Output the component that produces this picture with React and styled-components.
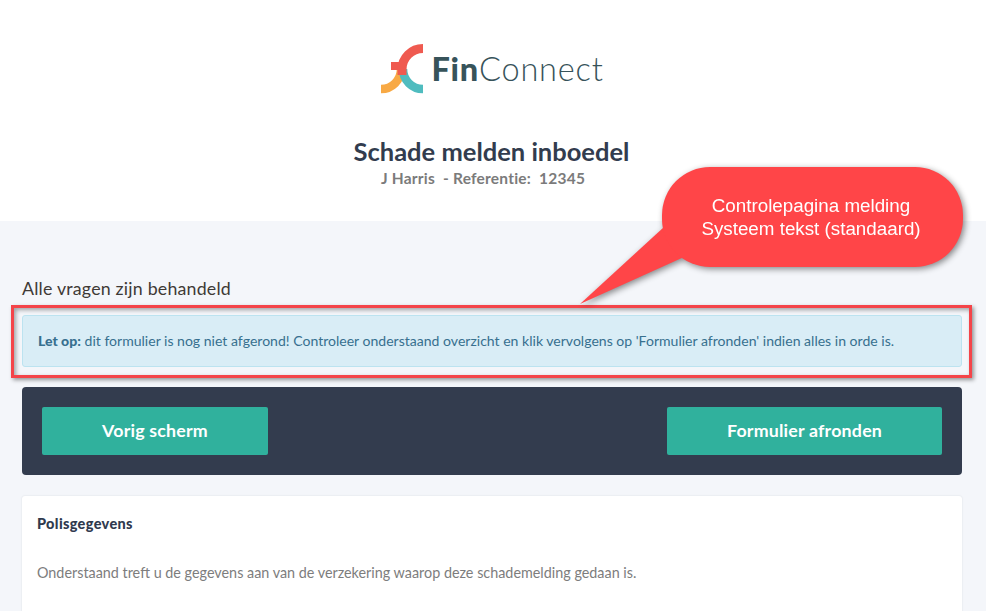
import React from "react";
import styled, { createGlobalStyle } from "styled-components";

const Global = createGlobalStyle`
  html, body { margin: 0; padding: 0; height: 100%; overflow: hidden; background: #f4f6fa; }
  * { box-sizing: border-box; }
  body { font-family: "Lato", "Open Sans", sans-serif; }
`;

const Page = styled.div`
  position: relative;
  width: 986px;
  height: 611px;
  overflow: hidden;
  background: #f4f6fa;
`;

const Header = styled.header`
  height: 221px;
  background: #fff;
  display: flex;
  flex-direction: column;
  align-items: center;
  padding-top: 42px;
`;

const Brand = styled.div`
  display: flex;
  align-items: center;
  gap: 6px;
  height: 53px;
  margin-left: -3px;
`;

const BrandName = styled.div`
  font-size: 32.5px;
  letter-spacing: 0.8px;
  color: #37535a;
  font-weight: 300;
  line-height: 53px;
  b { font-weight: 900; }
`;

const Title = styled.h1`
  margin: 41px 3px 0 0;
  font-size: 25.5px;
  line-height: 30px;
  font-weight: 700;
  color: #323c4e;
`;

const Subtitle = styled.div`
  font-size: 15.5px;
  letter-spacing: 0.22px;
  line-height: 20px;
  font-weight: 700;
  color: #7b7b7b;
  white-space: pre;
  margin: 2px 20px 0 0;
`;

const Main = styled.main`
  padding: 57px 24px 0 22px;
  display: flex;
  flex-direction: column;
`;

const Heading = styled.h2`
  margin: 0 0 17px;
  font-size: 17.8px;
  line-height: 20px;
  font-weight: 400;
  letter-spacing: 0.2px;
  color: #3f3a36;
`;

const Alert = styled.div`
  height: 52px;
  background: #d9edf6;
  border: 1px solid #bce3f0;
  border-radius: 3px;
  color: #37708f;
  font-size: 14.05px;
  display: flex;
  align-items: center;
  padding: 0 0 2px 15px;
  white-space: pre;
  b { font-weight: 900; }
`;

const ActionBar = styled.div`
  margin-top: 20px;
  height: 88px;
  background: #333c4e;
  border-radius: 4px;
  padding: 20px;
  display: flex;
  justify-content: space-between;
`;

const Button = styled.button`
  width: ${(p) => p.$w}px;
  height: 48px;
  border: 0;
  border-radius: 2px;
  padding: 0 0 3px;
  background: #30b19d;
  color: #fff;
  font: 700 17.8px "Lato", sans-serif;
  letter-spacing: 0.2px;
`;

const Card = styled.section`
  margin-top: 21px;
  height: 200px;
  background: #fff;
  border-radius: 3px;
  box-shadow: 0 0 2px rgba(40, 60, 80, 0.14);
  padding: 19px 15px;
`;

const CardTitle = styled.h3`
  margin: 0;
  font-size: 14.5px;
  letter-spacing: 0.35px;
  line-height: 18px;
  font-weight: 900;
  color: #2f3a4e;
`;

const CardText = styled.p`
  margin: 31px 0 0;
  font-size: 14.36px;
  line-height: 18px;
  color: #7d7d7d;
`;

const Frame = styled.div`
  position: absolute;
  left: 11px;
  top: 305px;
  width: 961px;
  height: 73px;
  border: 3px solid #f44449;
  box-shadow: 2px 2px 4px rgba(0, 0, 0, 0.4), inset 2px 2px 4px rgba(0, 0, 0, 0.35);
  pointer-events: none;
`;

const Callout = styled.div`
  position: absolute;
  left: 580px;
  top: 167px;
  width: 383px;
  height: 138px;
  filter: drop-shadow(2px 2px 3px rgba(0, 0, 0, 0.45));
`;

const CalloutTail = styled.svg`
  position: absolute;
  left: 0;
  top: 0;
`;

const CalloutBody = styled.div`
  position: absolute;
  left: 82px;
  top: 0;
  width: 301px;
  height: 100px;
  border-radius: 48px;
  background: #ff4548;
  color: #fff;
  font-family: "Liberation Sans", Arial, sans-serif;
  font-size: 18.8px;
  line-height: 23px;
  text-align: center;
  display: flex;
  align-items: center;
  justify-content: center;
  padding-right: 3px;
`;

const Logo = () => (
  <svg width="46" height="53" viewBox="0 0 46 53" fill="none">
    <path d="M2 47 A20 20 0 0 0 22 27" stroke="#f8a944" strokeWidth="8.5" />
    <path d="M44 47 A20 20 0 0 1 24 27" stroke="#4fbcbf" strokeWidth="8.5" />
    <path d="M44 6.5 A21 21 0 0 0 23 27.5 L23 33" stroke="#ef5a50" strokeWidth="9" />
    <rect x="12" y="20" width="14" height="8" fill="#ef5a50" />
  </svg>
);

export default function App() {
  return (
    <Page>
      <Global />
      <Header>
        <Brand>
          <Logo />
          <BrandName><b>Fin</b>Connect</BrandName>
        </Brand>
        <Title>Schade melden inboedel</Title>
        <Subtitle>J Harris  - Referentie:  12345</Subtitle>
      </Header>
      <Main>
        <Heading>Alle vragen zijn behandeld</Heading>
        <Alert>
          <b>Let op:</b> dit formulier is nog niet afgerond! Controleer onderstaand overzicht en klik vervolgens op 'Formulier afronden' indien alles in orde is.
        </Alert>
        <ActionBar>
          <Button $w={226}>Vorig scherm</Button>
          <Button $w={275}>Formulier afronden</Button>
        </ActionBar>
        <Card>
          <CardTitle>Polisgegevens</CardTitle>
          <CardText>Onderstaand treft u de gegevens aan van de verzekering waarop deze schademelding gedaan is.</CardText>
        </Card>
      </Main>
      <Frame />
      <Callout>
        <CalloutTail width="110" height="138" viewBox="0 0 110 138">
          <path d="M0 137 L84 60 L104 90 Z" fill="#ff4548" />
        </CalloutTail>
        <CalloutBody>Controlepagina melding<br />Systeem tekst (standaard)</CalloutBody>
      </Callout>
    </Page>
  );
}
